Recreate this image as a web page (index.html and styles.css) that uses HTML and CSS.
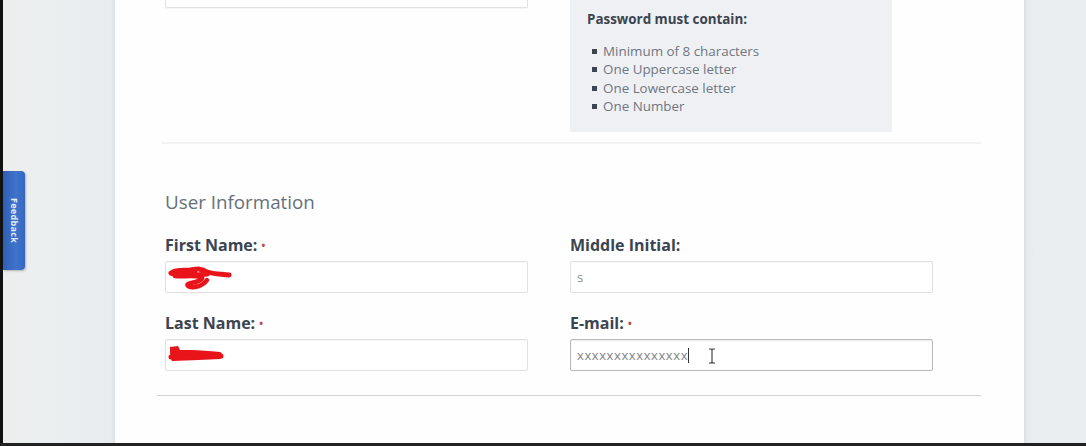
FILE: index.html
```html
<!DOCTYPE html>
<html>
<head>
<meta charset="utf-8">
<link rel="stylesheet" href="styles.css">
</head>
<body>
<div class="screen">
  <div class="black-strip"></div>
  <aside class="side-left">
    <div class="feedback-tab"><span>Feedback</span></div>
  </aside>
  <main class="panel">
    <div class="top-row">
      <div class="col">
        <div class="input-stub"></div>
      </div>
      <div class="col">
        <div class="pw-box">
          <div class="pw-title">Password must contain:</div>
          <ul class="pw-list">
            <li>Minimum of 8 characters</li>
            <li>One Uppercase letter</li>
            <li>One Lowercase letter</li>
            <li>One Number</li>
          </ul>
        </div>
      </div>
    </div>
    <hr class="divider">
    <h2 class="section-title">User Information</h2>
    <div class="form-grid">
      <div class="field">
        <label class="label">First Name: <span class="req">•</span></label>
        <div class="input">
          <svg class="scribble" width="70" height="30" viewBox="0 0 70 30">
            <path d="M4 8 C10 4 18 6 24 5 C30 4 34 3 40 7 C46 9 54 9 62 10" stroke="#e8141a" stroke-width="5" fill="none" stroke-linecap="round"/>
            <path d="M8 11 C16 12 26 10 34 12 C38 14 30 17 24 18 C18 19 20 23 28 22 C34 21 38 18 40 15" stroke="#e8141a" stroke-width="4.5" fill="none" stroke-linecap="round"/>
            <path d="M6 9 L28 8 M30 10 L40 9" stroke="#e8141a" stroke-width="5" fill="none" stroke-linecap="round"/>
          </svg>
        </div>
      </div>
      <div class="field">
        <label class="label">Middle Initial:</label>
        <div class="input"><span class="value">s</span></div>
      </div>
      <div class="field">
        <label class="label">Last Name: <span class="req">•</span></label>
        <div class="input">
          <svg class="scribble2" width="60" height="24" viewBox="0 0 60 24">
            <path d="M3 4 L11 3 L13 7 L24 7 C32 7 42 8 53 9 C56 10 56 15 53 16 C40 17 24 17 5 18 C3 15 3 9 3 4 Z" fill="#e8141a"/>
            <path d="M4 14 C20 14 36 13 54 13" stroke="#e8141a" stroke-width="5" fill="none" stroke-linecap="round"/>
          </svg>
        </div>
      </div>
      <div class="field">
        <label class="label">E-mail: <span class="req">•</span></label>
        <div class="input focused">
          <span class="value email">xxxxxxxxxxxxxxx</span><span class="caret"></span>
          <svg class="ibeam" width="8" height="16" viewBox="0 0 8 16">
            <path d="M1 1 H3 Q4 1 4 2 V14 Q4 15 3 15 H1 M7 1 H5 Q4 1 4 2 M4 14 Q4 15 5 15 H7" stroke="#333" stroke-width="1.1" fill="none"/>
          </svg>
        </div>
      </div>
    </div>
    <hr class="divider bottom">
  </main>
  <aside class="side-right"></aside>
</div>
<div class="bottom-bar"></div>
</body>
</html>
```
FILE: styles.css
```css
* { box-sizing: border-box; }
html, body { margin: 0; padding: 0; }
body {
  width: 1086px;
  height: 446px;
  overflow: hidden;
  font-family: "Open Sans", "Noto Sans", sans-serif;
  background: #ebeef0;
}
.screen {
  display: flex;
  height: 443px;
}
.black-strip {
  width: 3px;
  background: #111;
  flex: none;
}
.side-left {
  width: 112px;
  flex: none;
  background: linear-gradient(to right, #edeeee 0%, #ebeff0 40%, #e9ecee 96%, #dfe2e4 100%);
  padding-top: 171px;
}
.feedback-tab {
  width: 22px;
  height: 99px;
  background: linear-gradient(to right, #2f5eb3, #3f74cc 60%, #3567bd);
  border-radius: 0 4px 4px 0;
  display: flex;
  align-items: center;
  justify-content: center;
  box-shadow: 1px 1px 2px rgba(0,0,0,0.25);
}
.feedback-tab span {
  writing-mode: vertical-rl;
  color: #e8eef8;
  font-size: 9px;
  font-weight: 700;
  letter-spacing: 0.3px;
}
.panel {
  width: 909px;
  flex: none;
  background: #fefefe;
  padding-left: 50px;
}
.side-right {
  flex: 1;
  background: linear-gradient(to right, #dcdfe1 0, #e6e9ea 3px, #ebeef0 12px, #ebeef0 100%);
}
.top-row {
  display: grid;
  grid-template-columns: 363px 363px;
  column-gap: 42px;
}
.input-stub {
  height: 8px;
  border: 1px solid #e2e2e2;
  border-top: none;
  border-radius: 0 0 2px 2px;
  box-shadow: 0 1px 1px rgba(0,0,0,0.04);
}
.pw-box {
  width: 322px;
  height: 132px;
  background: #eff0f3;
  padding: 10px 17px 0 17px;
}
.pw-title {
  font-size: 13.4px;
  font-weight: 700;
  color: #3b4450;
  line-height: 18px;
}
.pw-list {
  list-style: none;
  margin: 14px 0 0 0;
  padding: 0;
}
.pw-list li {
  font-size: 13.4px;
  line-height: 18.4px;
  color: #6f7781;
  padding-left: 16px;
  position: relative;
}
.pw-list li::before {
  content: "";
  position: absolute;
  left: 5px;
  top: 7px;
  width: 5px;
  height: 5px;
  background: #3d4650;
}
.divider {
  border: none;
  height: 2px;
  background: #f1f2f3;
  margin: 10px 0 0 -3px;
  width: 819px;
}
.divider.bottom {
  background: #d3d3d3;
  height: 1px;
  margin: 24px 0 0 -8px;
  width: 824px;
}
.section-title {
  margin: 47px 0 0 0;
  font-size: 18.8px;
  font-weight: 400;
  line-height: 22px;
  color: #66707a;
}
.form-grid {
  display: grid;
  grid-template-columns: 363px 363px;
  column-gap: 42px;
  row-gap: 20px;
  margin-top: 22px;
}
.label {
  display: block;
  font-size: 16px;
  font-weight: 700;
  color: #3b4451;
  line-height: 20px;
}
.req {
  color: #c0464b;
  font-size: 10px;
  vertical-align: 2px;
}
.input {
  position: relative;
  margin-top: 6px;
  height: 32px;
  border: 1px solid #e0e0e0;
  border-radius: 2px;
  background: #fff;
  box-shadow: inset 0 1px 1px rgba(0,0,0,0.03);
  display: flex;
  align-items: center;
  padding-left: 6px;
}
.input.focused {
  border: 1px solid #b9b9b9;
  box-shadow: inset 0 1px 2px rgba(0,0,0,0.08);
}
.value {
  font-size: 13px;
  color: #8a8f94;
}
.email {
  font-size: 13px;
  letter-spacing: 0.6px;
  color: #7e8388;
}
.caret {
  width: 1px;
  height: 15px;
  background: #333;
}
.ibeam {
  position: absolute;
  left: 137px;
  top: 8px;
}
.scribble {
  position: absolute;
  left: 1px;
  top: 3px;
}
.scribble2 {
  position: absolute;
  left: 1px;
  top: 3px;
}
.bottom-bar {
  height: 3px;
  background: #222;
}
```
